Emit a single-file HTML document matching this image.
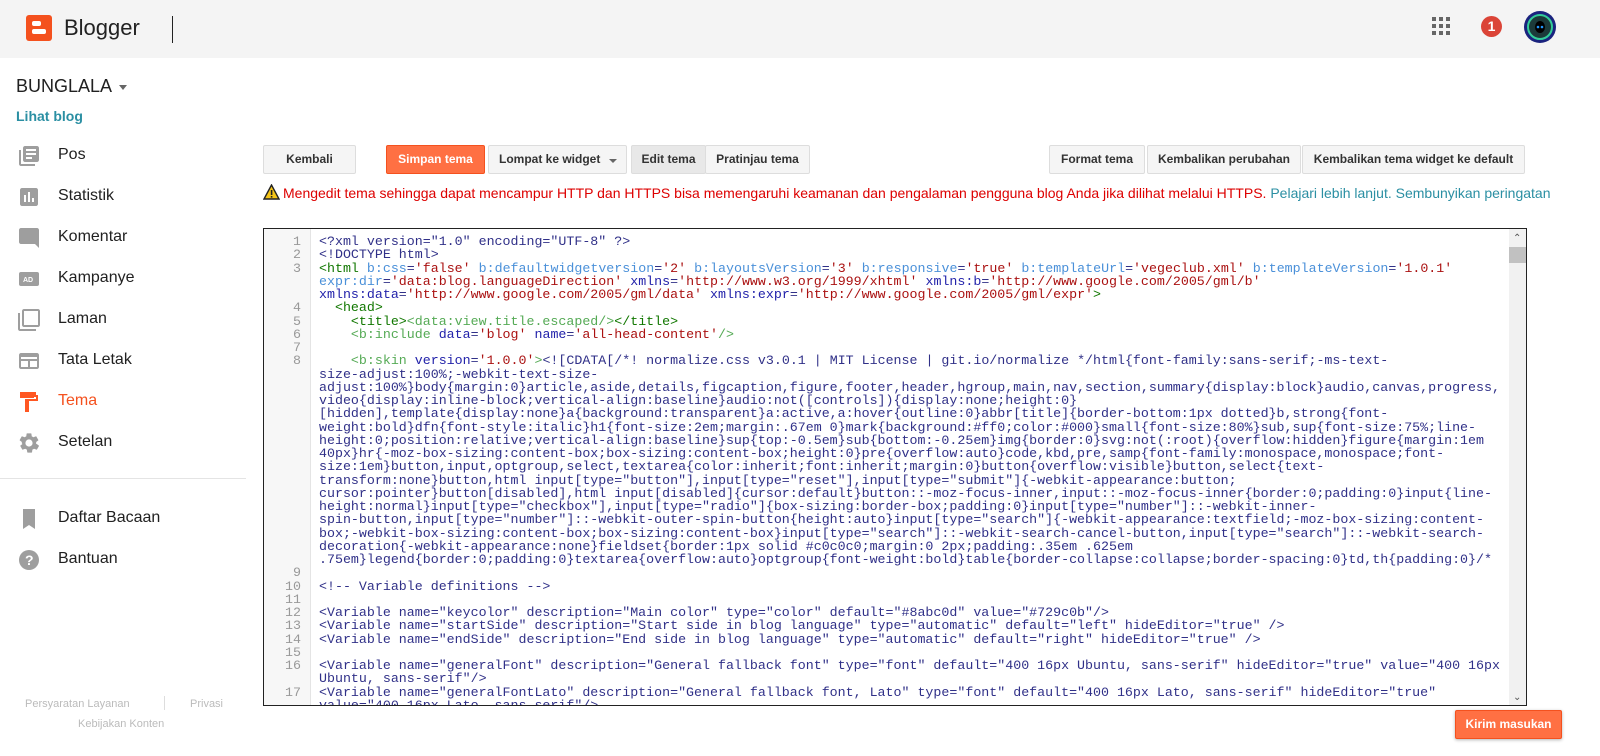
<!DOCTYPE html>
<html><head><meta charset="utf-8"><style>
*{box-sizing:border-box;margin:0;padding:0}
body{width:1600px;height:756px;overflow:hidden;background:#fff;font-family:"Liberation Sans",sans-serif;position:relative}
.hdr{position:absolute;left:0;top:0;width:1600px;height:58px;background:#f4f4f4}
.logo{position:absolute;left:26px;top:15px;width:26px;height:26px;background:#f4511e;border-radius:3px}
.logo i{position:absolute;background:#fff;border-radius:2px}
.a{position:absolute;white-space:nowrap}
.nav{position:absolute;left:0;font-size:16px;color:#212121;white-space:nowrap;width:240px}
.nav svg{position:absolute;left:17px;top:-2px}
.nav span{position:absolute;left:58px;top:0;white-space:nowrap}
.btn{position:absolute;top:145px;height:29px;border:1px solid #ddd;background:#f5f5f5;border-radius:2px;font-size:12px;font-weight:bold;color:#333;text-align:center;line-height:27px;white-space:nowrap}
.ed{position:absolute;left:263px;top:228px;width:1264px;height:478px;border:1px solid #222;overflow:hidden;background:#fff}
.gut{position:absolute;left:0;top:0;width:47px;height:100%;background:#f7f7f7;border-right:1px solid #e4e4e4}
.code{position:absolute;left:0;top:6px;font-family:"Liberation Mono",monospace;font-size:13.3px;line-height:13.25px;color:#303088}
.r{height:13.25px;white-space:pre;position:relative}
.r b{position:absolute;left:0;width:37px;text-align:right;font-weight:normal;color:#999}
.r s{position:absolute;left:55px;text-decoration:none}
.t{color:#170}.g{color:#5a5}.at{color:#22a}.lb{color:#4a90d9}.v{color:#a11}
.sb{position:absolute;right:0;top:0;width:17px;height:100%;background:#f1f1f1}
</style></head><body>
<div class="hdr">
<div class="logo"><i style="left:6px;top:6px;width:9px;height:5px"></i><i style="left:6px;top:14px;width:14px;height:5px"></i></div>
<div class="a" style="left:64px;top:15px;font-size:22px;color:#222">Blogger</div>
<div class="a" style="left:172px;top:16px;width:1px;height:27px;background:#222"></div>
<svg class="a" style="left:1432px;top:17px" width="18" height="18"><g fill="#666"><rect x="0" y="0" width="4" height="4"/><rect x="7" y="0" width="4" height="4"/><rect x="14" y="0" width="4" height="4"/><rect x="0" y="7" width="4" height="4"/><rect x="7" y="7" width="4" height="4"/><rect x="14" y="7" width="4" height="4"/><rect x="0" y="14" width="4" height="4"/><rect x="7" y="14" width="4" height="4"/><rect x="14" y="14" width="4" height="4"/></g></svg>
<div class="a" style="left:1481px;top:16px;width:21px;height:21px;border-radius:50%;background:#db4437;color:#fff;font-size:14px;font-weight:bold;text-align:center;line-height:21px">1</div>
<svg class="a" style="left:1523px;top:10px" width="34" height="34"><circle cx="17" cy="17" r="16" fill="#1a237e"/><circle cx="17" cy="17" r="12" fill="#1c3a3a" stroke="#3c9" stroke-width="2"/><ellipse cx="17" cy="17" rx="5" ry="6" fill="#000"/><circle cx="15" cy="17" r="1.3" fill="#29f"/><circle cx="19" cy="17" r="1.3" fill="#29f"/></svg>
</div>
<div class="a" style="left:16px;top:76px;font-size:18px;color:#212121">BUNGLALA</div>
<div class="a" style="left:119px;top:85px;border:4px solid transparent;border-top:5px solid #666"></div>
<div class="a" style="left:16px;top:108px;font-size:14px;font-weight:bold;color:#2b8fa3">Lihat blog</div>

<div class="nav" style="top:146px"><svg width="24" height="24"><path d="M4 6H2v14c0 1.1.9 2 2 2h14v-2H4V6zm16-4H8c-1.1 0-2 .9-2 2v12c0 1.1.9 2 2 2h12c1.1 0 2-.9 2-2V4c0-1.100-.9-2-2-2zm-1 9H9V9h10v2zm-4 4H9v-2h6v2zm4-8H9V5h10v2z" fill="#9e9e9e"/></svg><span>Pos</span></div>
<div class="nav" style="top:187px"><svg width="24" height="24"><path d="M19 3H5c-1.1 0-2 .9-2 2v14c0 1.1.9 2 2 2h14c1.1 0 2-.9 2-2V5c0-1.1-.9-2-2-2zM9 17H7v-7h2v7zm4 0h-2V7h2v10zm4 0h-2v-4h2v4z" fill="#9e9e9e"/></svg><span>Statistik</span></div>
<div class="nav" style="top:228px"><svg width="24" height="24"><path d="M21.99 4c0-1.1-.89-2-1.99-2H4c-1.1 0-2 .9-2 2v12c0 1.1.9 2 2 2h14l4 4-.01-18z" fill="#9e9e9e"/></svg><span>Komentar</span></div>
<div class="nav" style="top:269px"><svg width="24" height="24"><rect x="2" y="5" width="20" height="14" rx="2" fill="#9e9e9e"/><text x="6" y="15" font-size="7" font-family="Liberation Sans" font-weight="bold" fill="#fff">AD</text></svg><span>Kampanye</span></div>
<div class="nav" style="top:310px"><svg width="24" height="24"><path d="M3 5H1v16c0 1.1.9 2 2 2h16v-2H3V5zm18-4H7c-1.1 0-2 .9-2 2v14c0 1.1.9 2 2 2h14c1.1 0 2-.9 2-2V3c0-1.1-.9-2-2-2zm0 16H7V3h14v14z" fill="#9e9e9e"/></svg><span>Laman</span></div>
<div class="nav" style="top:351px"><svg width="24" height="24"><path d="M20 4H4c-1.1 0-2 .9-2 2v12c0 1.1.9 2 2 2h16c1.1 0 2-.9 2-2V6c0-1.1-.9-2-2-2zM4 8h16v2H4zm0 4h7v6H4zm9 6v-6h7v6z" fill="#9e9e9e"/></svg><span>Tata Letak</span></div>
<div class="nav" style="top:392px;color:#f4511e"><svg width="24" height="24"><path d="M3 2h16v3h2v6h-9v11H8V9h11V7h-2v1H3z" fill="#ff5722"/></svg><span>Tema</span></div>
<div class="nav" style="top:433px"><svg width="24" height="24"><path d="M19.14 12.94c.04-.3.06-.61.06-.94 0-.32-.02-.64-.07-.94l2.03-1.58a.49.49 0 00.12-.61l-1.92-3.32a.49.49 0 00-.59-.22l-2.39.96c-.5-.38-1.03-.7-1.62-.94l-.36-2.540a.48.48 0 00-.48-.41h-3.84c-.24 0-.43.17-.47.41l-.36 2.54c-.59.24-1.13.57-1.62.94l-2.39-.96a.48.48 0 00-.59.22L2.74 8.87c-.12.21-.08.47.12.61l2.03 1.58c-.05.3-.09.63-.09.94s.2.64.7.94l-2.03 1.58a.49.49 0 00-.12.61l1.92 3.32c.12.22.37.29.59.22l2.390-.96c.5.38 1.03.7 1.62.94l.36 2.54c.5.24.24.41.48.41h3.84c.24 0 .44-.17.47-.41l.36-2.54c.59-.24 1.13-.56 1.62-.94l2.39.96c.22.08.47 0 .59-.22l1.92-3.32c.12-.22.07-.47-.12-.61l-2.01-1.58zM12 15.6A3.6 3.6 0 1112 8.4a3.6 3.6 0 010 7.2z" fill="#9e9e9e"/></svg><span>Setelan</span></div>
<div class="a" style="left:0;top:478px;width:246px;height:1px;background:#e4e4e4"></div>
<div class="nav" style="top:509px"><svg width="24" height="24"><path d="M6 2h12v20l-6-4-6 4z" fill="#9e9e9e"/></svg><span>Daftar Bacaan</span></div>
<div class="nav" style="top:550px"><svg width="24" height="24"><circle cx="12" cy="12" r="10" fill="#9e9e9e"/><text x="8" y="17" font-size="14" font-weight="bold" font-family="Liberation Sans" fill="#fff">?</text></svg><span>Bantuan</span></div>
<div class="a" style="left:25px;top:698px;font-size:11px;color:#bbb">Persyaratan Layanan</div>
<div class="a" style="left:164px;top:696px;width:1px;height:14px;background:#ddd"></div>
<div class="a" style="left:190px;top:698px;font-size:11px;color:#bbb">Privasi</div>
<div class="a" style="left:78px;top:718px;font-size:11px;color:#bbb">Kebijakan Konten</div>

<div class="btn" style="left:263px;width:93px">Kembali</div>
<div class="btn" style="left:386px;width:99px;background:#ff7043;border-color:#f4511e;color:#fff">Simpan tema</div>
<div class="btn" style="left:488px;width:139px;text-align:left;padding-left:10px">Lompat ke widget<span style="position:absolute;left:120px;top:13px;border:4px solid transparent;border-top:4px solid #666"></span></div>
<div class="btn" style="left:631px;width:75px;background:#e8e8e8">Edit tema</div>
<div class="btn" style="left:705px;width:105px">Pratinjau tema</div>
<div class="btn" style="left:1049px;width:96px">Format tema</div>
<div class="btn" style="left:1147px;width:154px">Kembalikan perubahan</div>
<div class="btn" style="left:1302px;width:223px">Kembalikan tema widget ke default</div>
<svg class="a" style="left:263px;top:184px" width="17" height="16"><path d="M8.5 1L16 15H1z" fill="#f5c518" stroke="#222" stroke-width="1.4"/><rect x="7.8" y="6" width="1.6" height="5" fill="#222"/><rect x="7.8" y="12" width="1.6" height="1.6" fill="#222"/></svg>
<div class="a" style="left:283px;top:185px;font-size:14px;color:#d00">Mengedit tema sehingga dapat mencampur HTTP dan HTTPS bisa memengaruhi keamanan dan pengalaman pengguna blog Anda jika dilihat melalui HTTPS. <span style="color:#2b8fa3">Pelajari lebih lanjut. Sembunyikan peringatan</span></div>

<div class="ed"><div class="gut"></div>
<div class="code">
<div class="r"><b>1</b><s>&lt;?xml version="1.0" encoding="UTF-8" ?&gt;</s></div>
<div class="r"><b>2</b><s>&lt;!DOCTYPE html&gt;</s></div>
<div class="r"><b>3</b><s><span class="t">&lt;html</span> <span class="lb">b:css</span>=<span class="v">'false'</span> <span class="lb">b:defaultwidgetversion</span>=<span class="v">'2'</span> <span class="lb">b:layoutsVersion</span>=<span class="v">'3'</span> <span class="lb">b:responsive</span>=<span class="v">'true'</span> <span class="lb">b:templateUrl</span>=<span class="v">'vegeclub.xml'</span> <span class="lb">b:templateVersion</span>=<span class="v">'1.0.1'</span></s></div>
<div class="r"><s><span class="lb">expr:dir</span>=<span class="v">'data:blog.languageDirection'</span> <span class="at">xmlns</span>=<span class="v">'http://www.w3.org/1999/xhtml'</span> <span class="at">xmlns:b</span>=<span class="v">'http://www.google.com/2005/gml/b'</span></s></div>
<div class="r"><s><span class="at">xmlns:data</span>=<span class="v">'http://www.google.com/2005/gml/data'</span> <span class="at">xmlns:expr</span>=<span class="v">'http://www.google.com/2005/gml/expr'</span><span class="t">&gt;</span></s></div>
<div class="r"><b>4</b><s>  <span class="t">&lt;head&gt;</span></s></div>
<div class="r"><b>5</b><s>    <span class="t">&lt;title&gt;</span><span class="g">&lt;data:view.title.escaped/&gt;</span><span class="t">&lt;/title&gt;</span></s></div>
<div class="r"><b>6</b><s>    <span class="g">&lt;b:include</span> <span class="at">data</span>=<span class="v">'blog'</span> <span class="at">name</span>=<span class="v">'all-head-content'</span><span class="g">/&gt;</span></s></div>
<div class="r"><b>7</b><s> </s></div>
<div class="r"><b>8</b><s>    <span class="g">&lt;b:skin</span> <span class="at">version</span>=<span class="v">'1.0.0'</span><span class="g">&gt;</span>&lt;![CDATA[/*! normalize.css v3.0.1 | MIT License | git.io/normalize */html{font-family:sans-serif;-ms-text-</s></div>
<div class="r"><s>size-adjust:100%;-webkit-text-size-</s></div>
<div class="r"><s>adjust:100%}body{margin:0}article,aside,details,figcaption,figure,footer,header,hgroup,main,nav,section,summary{display:block}audio,canvas,progress,</s></div>
<div class="r"><s>video{display:inline-block;vertical-align:baseline}audio:not([controls]){display:none;height:0}</s></div>
<div class="r"><s>[hidden],template{display:none}a{background:transparent}a:active,a:hover{outline:0}abbr[title]{border-bottom:1px dotted}b,strong{font-</s></div>
<div class="r"><s>weight:bold}dfn{font-style:italic}h1{font-size:2em;margin:.67em 0}mark{background:#ff0;color:#000}small{font-size:80%}sub,sup{font-size:75%;line-</s></div>
<div class="r"><s>height:0;position:relative;vertical-align:baseline}sup{top:-0.5em}sub{bottom:-0.25em}img{border:0}svg:not(:root){overflow:hidden}figure{margin:1em</s></div>
<div class="r"><s>40px}hr{-moz-box-sizing:content-box;box-sizing:content-box;height:0}pre{overflow:auto}code,kbd,pre,samp{font-family:monospace,monospace;font-</s></div>
<div class="r"><s>size:1em}button,input,optgroup,select,textarea{color:inherit;font:inherit;margin:0}button{overflow:visible}button,select{text-</s></div>
<div class="r"><s>transform:none}button,html input[type="button"],input[type="reset"],input[type="submit"]{-webkit-appearance:button;</s></div>
<div class="r"><s>cursor:pointer}button[disabled],html input[disabled]{cursor:default}button::-moz-focus-inner,input::-moz-focus-inner{border:0;padding:0}input{line-</s></div>
<div class="r"><s>height:normal}input[type="checkbox"],input[type="radio"]{box-sizing:border-box;padding:0}input[type="number"]::-webkit-inner-</s></div>
<div class="r"><s>spin-button,input[type="number"]::-webkit-outer-spin-button{height:auto}input[type="search"]{-webkit-appearance:textfield;-moz-box-sizing:content-</s></div>
<div class="r"><s>box;-webkit-box-sizing:content-box;box-sizing:content-box}input[type="search"]::-webkit-search-cancel-button,input[type="search"]::-webkit-search-</s></div>
<div class="r"><s>decoration{-webkit-appearance:none}fieldset{border:1px solid #c0c0c0;margin:0 2px;padding:.35em .625em</s></div>
<div class="r"><s>.75em}legend{border:0;padding:0}textarea{overflow:auto}optgroup{font-weight:bold}table{border-collapse:collapse;border-spacing:0}td,th{padding:0}/*</s></div>
<div class="r"><b>9</b><s> </s></div>
<div class="r"><b>10</b><s>&lt;!-- Variable definitions --&gt;</s></div>
<div class="r"><b>11</b><s> </s></div>
<div class="r"><b>12</b><s>&lt;Variable name="keycolor" description="Main color" type="color" default="#8abc0d" value="#729c0b"/&gt;</s></div>
<div class="r"><b>13</b><s>&lt;Variable name="startSide" description="Start side in blog language" type="automatic" default="left" hideEditor="true" /&gt;</s></div>
<div class="r"><b>14</b><s>&lt;Variable name="endSide" description="End side in blog language" type="automatic" default="right" hideEditor="true" /&gt;</s></div>
<div class="r"><b>15</b><s> </s></div>
<div class="r"><b>16</b><s>&lt;Variable name="generalFont" description="General fallback font" type="font" default="400 16px Ubuntu, sans-serif" hideEditor="true" value="400 16px</s></div>
<div class="r"><s>Ubuntu, sans-serif"/&gt;</s></div>
<div class="r"><b>17</b><s>&lt;Variable name="generalFontLato" description="General fallback font, Lato" type="font" default="400 16px Lato, sans-serif" hideEditor="true"</s></div>
<div class="r"><s>value="400 16px Lato, sans-serif"/&gt;</s></div>
</div>
<div class="sb"><div style="position:absolute;left:0;top:18px;width:17px;height:16px;background:#c1c1c1"></div>
<div style="position:absolute;left:4px;top:4px;font-size:10px;color:#555">&#8963;</div>
<div style="position:absolute;left:4px;bottom:2px;font-size:10px;color:#555">&#8964;</div></div>
</div>
<div class="a" style="left:1455px;top:710px;width:107px;height:29px;background:#ff7043;border:1px solid #f4511e;border-radius:2px;color:#fff;font-size:12px;font-weight:bold;text-align:center;line-height:27px;box-shadow:0 1px 3px rgba(0,0,0,.3)">Kirim masukan</div>
</body></html>
